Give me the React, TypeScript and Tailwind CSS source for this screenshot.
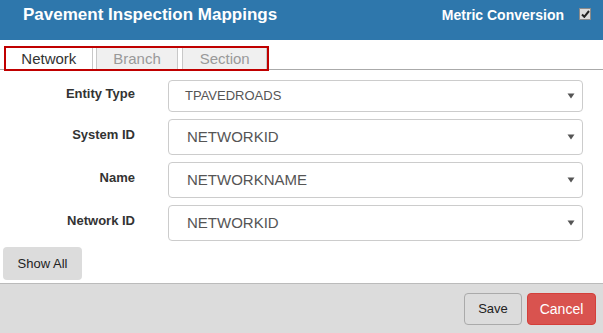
import { useState } from "react";

interface Mapping {
  label: string;
  value: string;
  small?: boolean;
}

const mappings: Mapping[] = [
  { label: "Entity Type", value: "TPAVEDROADS", small: true },
  { label: "System ID", value: "NETWORKID" },
  { label: "Name", value: "NETWORKNAME" },
  { label: "Network ID", value: "NETWORKID" },
];

const tabs = ["Network", "Branch", "Section"];

const Caret = () => (
  <svg width="8" height="6" viewBox="0 0 8 6" className="shrink-0">
    <path d="M0.5 0.5 H7.5 L4 5.5 Z" fill="#555" />
  </svg>
);

export default function App() {
  const [activeTab, setActiveTab] = useState(0);
  const [metric, setMetric] = useState(true);

  return (
    <div className="w-[603px] h-[333px] bg-white flex flex-col font-['Liberation_Sans',Arial,sans-serif] overflow-hidden">
      {/* Header */}
      <div className="h-10 bg-[#2e77ac] flex items-start justify-between pt-[5px] pl-[23px] pr-[12px] shrink-0">
        <h1 className="text-[17px] leading-5 font-bold text-white">Pavement Inspection Mappings</h1>
        <div className="flex items-center">
          <span className="text-[14px] leading-5 font-bold text-white">Metric Conversion</span>
          <button
            onClick={() => setMetric(!metric)}
            className="ml-[15px] mb-[3px] w-[12px] h-[12px] bg-[#dcdcdc] border border-[#8a8a8a] flex items-center justify-center"
          >
            {metric && (
              <svg width="9" height="8" viewBox="0 0 9 8">
                <path d="M1 4.5 L3.3 6.8 L8 1" stroke="#222" strokeWidth="2" fill="none" />
              </svg>
            )}
          </button>
        </div>
      </div>

      {/* Tabs */}
      <div className="flex items-end border-b border-[#aaa] pl-1 pt-[6px] shrink-0">
        <div className="flex items-end gap-[3px] border-2 border-[#c00000] h-[25px] w-[265px] mb-[-2px]">
          {tabs.map((tab, idx) => (
            <button
              key={tab}
              onClick={() => setActiveTab(idx)}
              className={`h-[21px] text-[15px] leading-[20px] text-center border-r border-[#c8c8c8] ${
                idx === 0 ? "w-[87px]" : idx === 1 ? "w-[83px] border-l" : "w-[85px] border-l ml-[1px]"
              } ${idx === activeTab ? "bg-white text-[#333]" : "bg-[#f0f0f0] text-[#999]"}`}
            >
              {tab}
            </button>
          ))}
        </div>
      </div>

      {/* Form */}
      <div className="flex flex-col gap-[7px] pt-[10px] pr-[20px]">
        {mappings.map((m, idx) => (
          <div key={m.label} className="flex items-center">
            <label className="w-[135px] text-right text-[13px] font-bold text-[#333] leading-4 pb-[4px] shrink-0">
              {m.label}
            </label>
            <div
              className={`ml-[33px] flex-1 flex items-center justify-between border border-[#ccc] rounded-[4px] pr-[7px] ${
                idx === 0 ? "h-8 pl-4" : "h-9 pl-[18px]"
              }`}
            >
              <span className={`${m.small ? "text-[13px]" : "text-[15px]"} text-[#555]`}>{m.value}</span>
              <Caret />
            </div>
          </div>
        ))}
      </div>

      <div className="pl-[3px] pt-[6px]">
        <button className="w-[79px] h-[33px] bg-[#dcdcdc] rounded-[4px] text-[13px] text-[#222]">Show All</button>
      </div>

      {/* Footer */}
      <div className="mt-[3px] flex-1 bg-[#dcdcdc] border-t border-[#bbb] flex items-start justify-end gap-[5px] pt-[9px] pr-[7px]">
        <button className="w-[58px] h-[32px] border border-[#aaa] rounded-[4px] text-[13px] text-[#222]">Save</button>
        <button className="w-[69px] h-[32px] bg-[#d9534f] border border-[#d43f3a] rounded-[4px] text-[14px] text-white">
          Cancel
        </button>
      </div>
    </div>
  );
}
